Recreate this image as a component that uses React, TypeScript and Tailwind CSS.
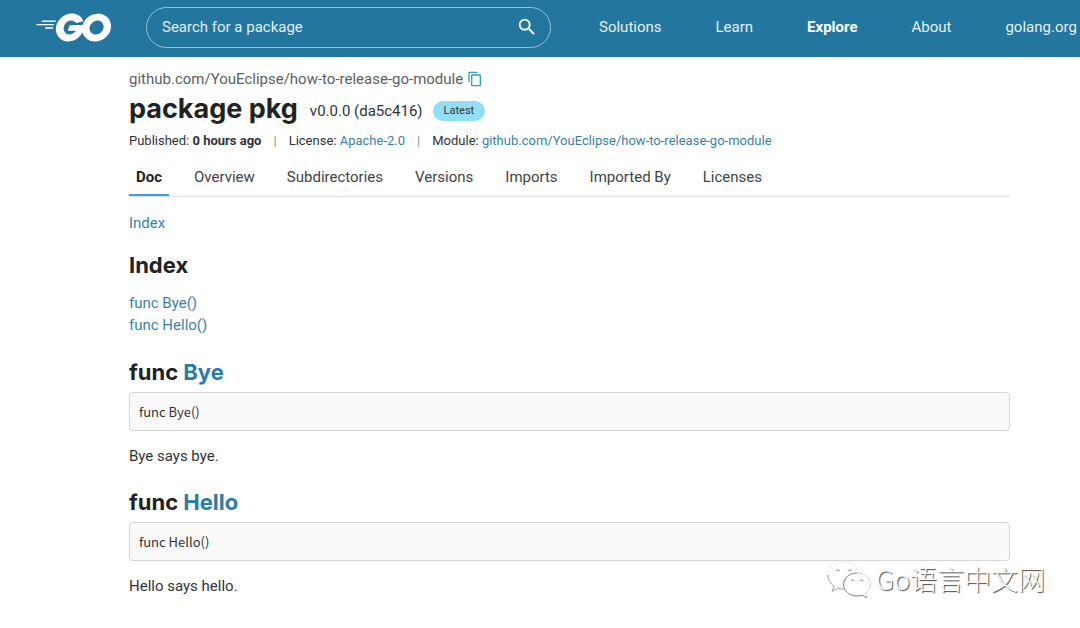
import React from 'react'
import { MdContentCopy, MdSearch } from 'react-icons/md'
import { SiGo } from 'react-icons/si'

const MODULE_PATH = 'github.com/YouEclipse/how-to-release-go-module'

const NAV_LINKS = ['Solutions', 'Learn', 'Explore', 'About', 'golang.org']

const TABS = ['Doc', 'Overview', 'Subdirectories', 'Versions', 'Imports', 'Imported By', 'Licenses']

const FUNCS = [
  { name: 'Bye', doc: 'Bye says bye.' },
  { name: 'Hello', doc: 'Hello says hello.' },
]

function Header() {
  return (
    <header className="flex h-[57px] items-center overflow-hidden bg-[#23769e] pb-[3px] pl-9 text-[15px] text-white">
      <a href="#" aria-label="Go" className="shrink-0">
        <SiGo className="size-[75px]" />
      </a>
      <form className="ml-[35px] flex h-[41px] w-[405px] shrink-0 items-center rounded-full border border-[#9cc0d6] pr-3 pl-[15px]">
        <input
          type="text"
          aria-label="Search for a package"
          placeholder="Search for a package"
          className="min-w-0 grow bg-transparent outline-none placeholder:text-[#e3eef4]"
        />
        <button type="button" aria-label="Search">
          <MdSearch className="size-[22px]" />
        </button>
      </form>
      <nav className="ml-12 flex shrink-0 gap-[54px]">
        {NAV_LINKS.map((link) => (
          <a href="#" key={link} className={link === 'Explore' ? 'font-bold' : 'text-[#e6f0f5]'}>
            {link}
          </a>
        ))}
      </nav>
    </header>
  )
}

function PackageInfo() {
  return (
    <>
      <div className="flex items-center gap-1 text-[15px] leading-5 text-[#5c6063]">
        <span>{MODULE_PATH}</span>
        <button type="button" aria-label="Copy path">
          <MdContentCopy className="size-4 text-[#2b9fd0]" />
        </button>
      </div>
      <div className="flex h-10 items-center">
        <h1 className="font-[Inter] text-[27px] font-bold text-[#202224]">package pkg</h1>
        <div className="flex items-center gap-[10px] pt-1 pl-3">
          <span className="text-[15px]">v0.0.0 (da5c416)</span>
          <span className="rounded-full bg-[#92dff5] px-[11px] text-[11px] leading-5">Latest</span>
        </div>
      </div>
      <div className="flex text-[13px] leading-6">
        <span>
          Published: <strong>0 hours ago</strong>
        </span>
        <span className="mx-3 text-[#8a8d90]">|</span>
        <span>
          License: <a href="#" className="text-[#3b7fa6]">Apache-2.0</a>
        </span>
        <span className="mx-3 text-[#8a8d90]">|</span>
        <span>
          Module: <a href="#" className="text-[#3b7fa6]">{MODULE_PATH}</a>
        </span>
      </div>
    </>
  )
}

function Tabs() {
  return (
    <nav className="flex gap-[18px] border-b border-[#dfe1e3] text-[15px] text-[#404346]">
      {TABS.map((tab, i) => (
        <a
          href="#"
          key={tab}
          className={
            i === 0
              ? 'border-b-2 border-[#3d9fd2] px-[7px] pt-[13px] pb-[6px] font-bold text-[#202224]'
              : 'px-[7px] pt-[13px] pb-[6px]'
          }
        >
          {tab}
        </a>
      ))}
    </nav>
  )
}

function Watermark() {
  return (
    <div className="absolute right-[35px] bottom-[29px] flex items-center gap-1">
      <svg
        width="46"
        height="40"
        viewBox="0 0 46 40"
        fill="#fff"
        stroke="#b5b5b5"
        strokeLinejoin="round"
      >
        <path stroke="#e2e2e2" strokeDasharray="3 2" d="M8 27c-3.500-2.500-6-6-6-10.500C2 9 9 3 18 3s14 5 15 11" />
        <path stroke="#a5a5a5" d="M2 15.500v1C2 21 4.500 24.500 8 27l-2 5.500 6-3.200c2 .5 4 .7 6 .7" />
        <path stroke="#d5d5d5" d="M31 14c-7.500 0-13.500 5-13.500 11.500S23.500 37 31 37c1.800 0 3.500-.3 5-.8l5 2.600-1.500-4.600c3-2 5-5.200 5-8.700C44.500 19 38.500 14 31 14Z" />
        <path fill="none" stroke="#8f8f8f" d="M31 14c-7.500 0-13.500 5-13.500 11.500S23.500 37 31 37c1.800 0 3.500-.3 5-.8l5 2.600" />
        <g fill="none" stroke="#8f8f8f">
          <path d="M10 12q2-2.500 4 0M22 12q2-2.500 4 0M25 22q1.500-2.500 3.500 0M34 22q1.500-2.500 3.500 0" />
        </g>
      </svg>
      <span className="font-['Noto_Sans_CJK_SC',sans-serif] text-[27px] leading-10 font-light text-white [text-shadow:1px_1px_1px_#444444]">
        Go语言中文网
      </span>
    </div>
  )
}

function App() {
  return (
    <div className="relative min-h-screen bg-white font-[Roboto,sans-serif] text-[#303336]">
      <Header />
      <main className="pt-3 pr-[70px] pl-[129px] text-[15px] leading-[22px]">
        <PackageInfo />
        <Tabs />
        <a href="#index" className="mt-[15px] block text-[#3b7fa6]">
          Index
        </a>
        <h2 id="index" className="mt-4 font-[Inter] text-[22px] leading-[30px] font-bold text-[#202224]">
          Index
        </h2>
        <ul className="mt-3 mb-px text-[#3b7fa6]">
          {FUNCS.map((fn) => (
            <li key={fn.name}>
              <a href={`#${fn.name}`}>func {fn.name}()</a>
            </li>
          ))}
        </ul>
        {FUNCS.map((fn) => (
          <section key={fn.name} id={fn.name} className="pt-5">
            <h3 className="font-[Inter] text-[22px] leading-[30px] font-bold text-[#202224]">
              func <a href="#" className="text-[#2b7da8]">{fn.name}</a>
            </h3>
            <pre className="mt-[5px] rounded-sm border border-[#d3d5d7] bg-[#fafafa] px-[9px] py-2 font-['Noto_Sans_CJK_SC',sans-serif] text-[13px] leading-[21px]">
              func {fn.name}()
            </pre>
            <p className="mt-[14px]">{fn.doc}</p>
          </section>
        ))}
      </main>
      <Watermark />
    </div>
  )
}

export default App
